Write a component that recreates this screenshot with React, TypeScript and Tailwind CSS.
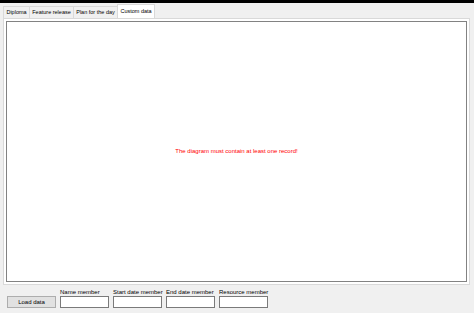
const tabs = [
  { label: "Diploma", w: "w-[27px]" },
  { label: "Feature release", w: "w-[45px]" },
  { label: "Plan for the day", w: "w-[45px]" },
];
const fields = ["Name member", "Start date member", "End date member", "Resource member"];

export default function App() {
  return (
    <div className="w-[474px] h-[313px] bg-[#f0f0f0] flex flex-col overflow-hidden text-[6px] text-black" style={{ fontFamily: '"Liberation Sans", Arial, sans-serif' }}>
      <div className="h-[3px] bg-black shrink-0" />
      <div className="flex flex-col pl-[3px] pr-[4px] pt-[1px]">
        {/* tab strip */}
        <div className="flex items-end h-[14px] text-[5.5px]">
          {tabs.map((t) => (
            <div key={t.label} className={`${t.w} h-[12px] flex items-center justify-center border border-b-0 border-[#d9d9d9] bg-[#f0f0f0] -mr-px whitespace-nowrap`}>
              {t.label}
            </div>
          ))}
          <div className="w-[38px] h-[14px] flex items-center justify-center border border-b-0 border-[#d9d9d9] bg-white whitespace-nowrap">
            Custom data
          </div>
        </div>
        {/* tab page */}
        <div className="h-[267px] bg-white border border-[#d9d9d9] p-[2px]">
          <div className="h-full border border-[#828282] flex items-center justify-center">
            <span className="text-[#ff0000]">The diagram must contain at least one record!</span>
          </div>
        </div>
      </div>
      {/* bottom controls */}
      <div className="flex items-end gap-[4px] pl-[7px] pt-[3px]">
        <button className="w-[49px] h-[12px] bg-[#e1e1e1] border border-[#adadad] flex items-center justify-center">
          Load data
        </button>
        {fields.map((f) => (
          <div key={f} className="flex flex-col w-[49px]">
            <span className="leading-[8px] whitespace-nowrap">{f}</span>
            <div className="h-[12px] bg-white border border-[#7a7a7a]" />
          </div>
        ))}
      </div>
    </div>
  );
}
